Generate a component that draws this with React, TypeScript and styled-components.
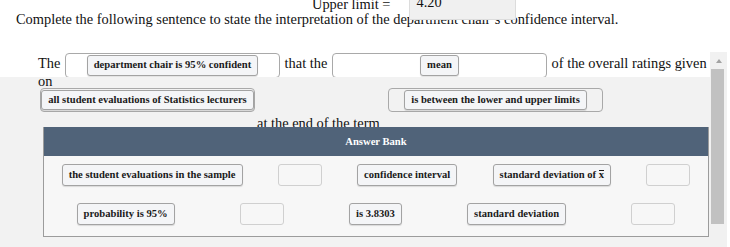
import React from "react";
import styled, { createGlobalStyle } from "styled-components";

const Global = createGlobalStyle`
  html, body { margin: 0; padding: 0; background: #fff; }
  body {
    font-family: "Liberation Serif", "Times New Roman", serif;
    color: #111;
  }
`;

const serif = `"Liberation Serif", "Times New Roman", serif`;

const Page = styled.div`
  width: 730px;
  height: 247px;
  overflow: hidden;
  font-family: ${serif};
`;

const UpperRow = styled.div`
  display: flex;
  align-items: flex-end;
  gap: 19px;
  height: 11px;
  padding-left: 312px;
`;

const UpperLabel = styled.span`
  font-size: 14.4px;
  line-height: 14px;
  white-space: nowrap;
`;

const ValueBox = styled.div`
  position: relative;
  box-sizing: border-box;
  display: flex;
  align-items: center;
  width: 107px;
  height: 36px;
  margin-bottom: -9px;
  padding-left: 6px;
  background: #f0f0f0;
  border: 1px solid #dcdcdc;
  font-size: 14.4px;
  line-height: 16px;
`;

const Prompt = styled.p`
  margin: 0 0 0 16px;
  font-size: 14.4px;
  line-height: 16px;
  white-space: nowrap;
`;

const Workspace = styled.div`
  display: flex;
  width: 727px;
  height: 195px;
  margin-top: 25px;
`;

const Content = styled.div`
  flex: 1;
  display: flex;
  flex-direction: column;
  background: #fff;
`;

const SentenceLine = styled.div`
  box-sizing: border-box;
  height: 25px;
  padding: 1px 0 0 38px;
  font-size: 14.4px;
  white-space: nowrap;
`;

const DropBox = styled.span<{ $h: number }>`
  box-sizing: border-box;
  display: inline-flex;
  align-items: center;
  justify-content: center;
  width: 215px;
  height: ${(p) => p.$h}px;
  margin: 0 1px;
  border: 1px solid #a9a9a9;
  border-radius: 4px;
  vertical-align: baseline;
`;

const Chip = styled.span<{ $h: number; $lh: number }>`
  box-sizing: border-box;
  display: inline-block;
  height: ${(p) => p.$h}px;
  line-height: ${(p) => p.$lh}px;
  padding: 0 6px;
  background: #f4f5f7;
  border: 1px solid #a3a3a3;
  border-radius: 3px;
  box-shadow: 0 1px 1px rgba(0, 0, 0, 0.12);
  font-family: ${serif};
  font-size: 10.6px;
  font-weight: bold;
  color: #1a1a1a;
  white-space: nowrap;
`;

const Lower = styled.div`
  flex: 1;
  display: flex;
  flex-direction: column;
  background: #f2f2f2;
`;

const OnLine = styled.div`
  height: 8px;
  padding-left: 38px;
  font-size: 14.4px;
  line-height: 8px;
`;

const BoxLine = styled.div`
  display: flex;
  gap: 131px;
  margin-top: 3px;
  padding-left: 39px;
`;

const TailLine = styled.div`
  height: 7px;
  margin-top: 8px;
  padding-left: 257px;
  font-size: 14.4px;
  line-height: 7px;
  white-space: nowrap;
`;

const Bank = styled.section`
  position: relative;
  margin: 0 1px 0 43px;
  border: 1px solid #9c9c9c;
  border-top: 0;
`;

const BankHeader = styled.div`
  display: flex;
  align-items: center;
  justify-content: center;
  height: 29px;
  background: #506379;
  color: #fff;
  font-family: ${serif};
  font-size: 10.6px;
  font-weight: bold;
`;

const BankBody = styled.div`
  display: flex;
  flex-direction: column;
  gap: 17px;
  padding: 8px 0 11px;
  background: #f7f7f7;
`;

const BankRow = styled.div`
  display: flex;
  justify-content: space-around;
  align-items: center;
`;

const Slot = styled.span`
  box-sizing: border-box;
  width: 44px;
  height: 22px;
  border: 1px solid #d0d0d0;
  border-radius: 3px;
`;

const Bar = styled.span`
  display: inline-block;
  border-top: 1px solid #1a1a1a;
  line-height: 8px;
`;

const Scrollbar = styled.div`
  display: flex;
  flex-direction: column;
  width: 17px;
  background: #f1f1f1;
`;

const ArrowButton = styled.div`
  display: flex;
  align-items: center;
  justify-content: center;
  height: 17px;
`;

const Triangle = styled.span`
  width: 0;
  height: 0;
  border-left: 3.5px solid transparent;
  border-right: 3.5px solid transparent;
  border-bottom: 4px solid #a3a3a3;
`;

const Thumb = styled.div`
  height: 155px;
  margin: 0 3px 0 1px;
  background: #c1c1c1;
`;

const BankChip = ({ children }: { children: React.ReactNode }) => (
  <Chip $h={22} $lh={19}>
    {children}
  </Chip>
);

export default function App() {
  return (
    <Page>
      <Global />
      <UpperRow>
        <UpperLabel>Upper limit =</UpperLabel>
        <ValueBox>4.20</ValueBox>
      </UpperRow>
      <Prompt>
        Complete the following sentence to state the interpretation of the department chair’s confidence interval.
      </Prompt>
      <Workspace>
        <Content>
          <SentenceLine>
            The{" "}
            <DropBox $h={25}>
              <Chip $h={21} $lh={17}>department chair is 95% confident</Chip>
            </DropBox>{" "}
            that the{" "}
            <DropBox $h={25}>
              <Chip $h={21} $lh={17}>mean</Chip>
            </DropBox>{" "}
            of the overall ratings given
          </SentenceLine>
          <Lower>
            <OnLine>on</OnLine>
            <BoxLine>
              <DropBox $h={24}>
                <Chip $h={20} $lh={17}>all student evaluations of Statistics lecturers</Chip>
              </DropBox>
              <DropBox $h={24}>
                <Chip $h={20} $lh={17}>is between the lower and upper limits</Chip>
              </DropBox>
            </BoxLine>
            <TailLine>at the end of the term</TailLine>
            <Bank>
              <BankHeader>Answer Bank</BankHeader>
              <BankBody>
                <BankRow>
                  <BankChip>the student evaluations in the sample</BankChip>
                  <Slot />
                  <BankChip>confidence interval</BankChip>
                  <BankChip>
                    standard deviation of <Bar>x</Bar>
                  </BankChip>
                  <Slot />
                </BankRow>
                <BankRow>
                  <BankChip>probability is 95%</BankChip>
                  <Slot />
                  <BankChip>is 3.8303</BankChip>
                  <BankChip>standard deviation</BankChip>
                  <Slot />
                </BankRow>
              </BankBody>
            </Bank>
          </Lower>
        </Content>
        <Scrollbar>
          <ArrowButton>
            <Triangle />
          </ArrowButton>
          <Thumb />
        </Scrollbar>
      </Workspace>
    </Page>
  );
}
